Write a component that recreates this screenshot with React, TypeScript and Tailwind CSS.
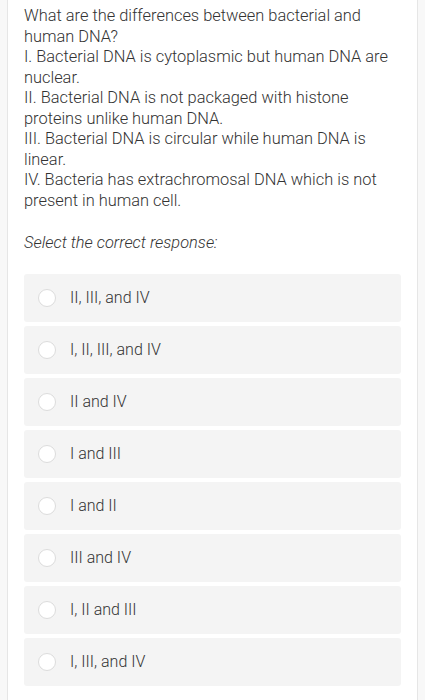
const options = [
  'II, III, and IV',
  'I, II, III, and IV',
  'II and IV',
  'I and III',
  'I and II',
  'III and IV',
  'I, II and III',
  'I, III, and IV',
]

export default function App() {
  return (
    <div className="min-h-[700px] bg-[#f8f8f8] px-[7px] font-['Roboto',sans-serif]">
      <div className="min-h-[700px] bg-white border-x border-[#e6e6e6] px-4 pt-[6px] pb-3">
        {/* Question */}
        <div className="text-[16.4px] leading-[20.5px] text-[#333] font-light">
          <p>What are the differences between bacterial and human DNA?</p>
          <p>I. Bacterial DNA is cytoplasmic but human DNA are nuclear.</p>
          <p>II. Bacterial DNA is not packaged with histone proteins unlike human DNA.</p>
          <p>III. Bacterial DNA is circular while human DNA is linear.</p>
          <p>IV. Bacteria has extrachromosal DNA which is not present in human cell.</p>
        </div>

        <p className="mt-[22px] text-[16.4px] leading-[20.5px] italic font-light text-[#333]">
          Select the correct response:
        </p>

        {/* Options */}
        <div className="mt-[20px] flex flex-col gap-[4px]">
          {options.map((opt) => (
            <div
              key={opt}
              className="h-[48px] flex items-center rounded-[3px] bg-[#f4f4f4] pl-[14px]"
            >
              <span className="w-[18px] h-[18px] rounded-full border-[1.5px] border-[#dcdcdc] bg-white shrink-0" />
              <span className="ml-[14px] text-[16px] font-light text-[#333]">{opt}</span>
            </div>
          ))}
        </div>
      </div>
    </div>
  )
}
